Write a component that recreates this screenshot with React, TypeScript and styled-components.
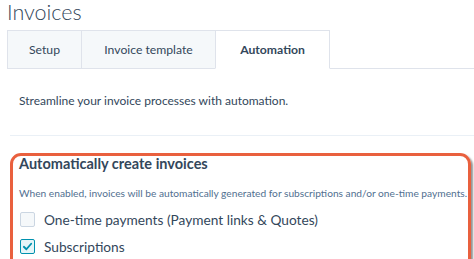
import React, { useState } from "react";
import styled, { createGlobalStyle } from "styled-components";

const GlobalStyle = createGlobalStyle`
  html, body {
    margin: 0;
    padding: 0;
    background: #ffffff;
    overflow: hidden;
  }
  body {
    font-family: "Lato", "Noto Sans", "Liberation Sans", sans-serif;
    color: #33475b;
  }
`;

const Page = styled.div`
  width: 474px;
  height: 259px;
  overflow: hidden;
`;

const Title = styled.h1`
  margin: 0;
  padding: 1px 0 0 7px;
  height: 30px;
  box-sizing: border-box;
  font-size: 21.5px;
  font-weight: 300;
  line-height: 22px;
  color: #33475b;
`;

const TabBar = styled.div`
  display: flex;
  height: 39px;
  padding-left: 7px;
`;

const Tab = styled.button<{ $active?: boolean; $width: number }>`
  box-sizing: border-box;
  height: 39px;
  width: ${(p) => p.$width}px;
  padding: 0;
  font-family: inherit;
  font-size: 12.2px;
  font-weight: ${(p) => (p.$active ? 700 : 400)};
  color: #33475b;
  background: ${(p) => (p.$active ? "#ffffff" : "#f5f8fa")};
  border: 1px solid #dfe3eb;
  border-bottom-color: ${(p) => (p.$active ? "transparent" : "#dfe3eb")};
  margin-left: -1px;
  cursor: pointer;
  &:first-child {
    margin-left: 0;
  }
`;

const TabFill = styled.div`
  flex: 1;
  border-bottom: 1px solid #dfe3eb;
`;

const Panel = styled.div`
  padding: 0 0 0 10px;
`;

const Intro = styled.p`
  margin: 0;
  padding: 24px 0 0 9px;
  box-sizing: border-box;
  height: 67px;
  font-size: 12px;
  line-height: 16px;
  border-bottom: 1px solid #eaf0f6;
`;

const Callout = styled.section`
  margin: 17px 3px 0 0;
  border: 3px solid #e9603e;
  border-radius: 11px;
  box-shadow: 2px 2px 2px rgba(60, 60, 60, 0.55);
  padding: 0 0 16px 6px;
`;

const SectionTitle = styled.h2`
  margin: 0;
  font-size: 14.5px;
  font-weight: 700;
  line-height: 16px;
  color: #33475b;
`;

const Help = styled.p`
  margin: 14px 0 0;
  font-size: 10.2px;
  line-height: 14px;
  color: #516f90;
  white-space: nowrap;
`;

const Options = styled.div`
  display: flex;
  flex-direction: column;
  gap: 11px;
  margin-top: 11px;
`;

const Option = styled.label`
  display: flex;
  align-items: center;
  gap: 9px;
  height: 16px;
  font-size: 13.7px;
  color: #33475b;
  cursor: pointer;
`;

const Box = styled.span<{ $checked: boolean }>`
  box-sizing: border-box;
  width: 15px;
  height: 15px;
  margin-left: 1px;
  border-radius: 2px;
  border: ${(p) => (p.$checked ? "1.5px solid #0091ae" : "1px solid #cbd6e2")};
  background: ${(p) => (p.$checked ? "#e5f5f8" : "#f5f8fa")};
  display: flex;
  align-items: center;
  justify-content: center;
`;

const Check = () => (
  <svg width="11" height="11" viewBox="0 0 12 12" fill="none">
    <path d="M2 6.3 L4.8 9 L10 3" stroke="#0091ae" strokeWidth="2" strokeLinecap="round" strokeLinejoin="round" />
  </svg>
);

const tabs = [
  { label: "Setup", width: 75 },
  { label: "Invoice template", width: 135 },
  { label: "Automation", width: 115 },
];

export default function App() {
  const [active, setActive] = useState(2);
  const [oneTime, setOneTime] = useState(false);
  const [subs, setSubs] = useState(true);

  return (
    <Page>
      <GlobalStyle />
      <Title>Invoices</Title>
      <TabBar>
        {tabs.map((t, i) => (
          <Tab key={t.label} $width={t.width} $active={i === active} onClick={() => setActive(i)}>
            {t.label}
          </Tab>
        ))}
        <TabFill />
      </TabBar>
      <Panel>
        <Intro>Streamline your invoice processes with automation.</Intro>
        <Callout>
          <SectionTitle>Automatically create invoices</SectionTitle>
          <Help>
            When enabled, invoices will be automatically generated for subscriptions and/or one-time payments.
          </Help>
          <Options>
            <Option onClick={() => setOneTime(!oneTime)}>
              <Box $checked={oneTime}>{oneTime && <Check />}</Box>
              One-time payments (Payment links &amp; Quotes)
            </Option>
            <Option onClick={() => setSubs(!subs)}>
              <Box $checked={subs}>{subs && <Check />}</Box>
              Subscriptions
            </Option>
          </Options>
        </Callout>
      </Panel>
    </Page>
  );
}
